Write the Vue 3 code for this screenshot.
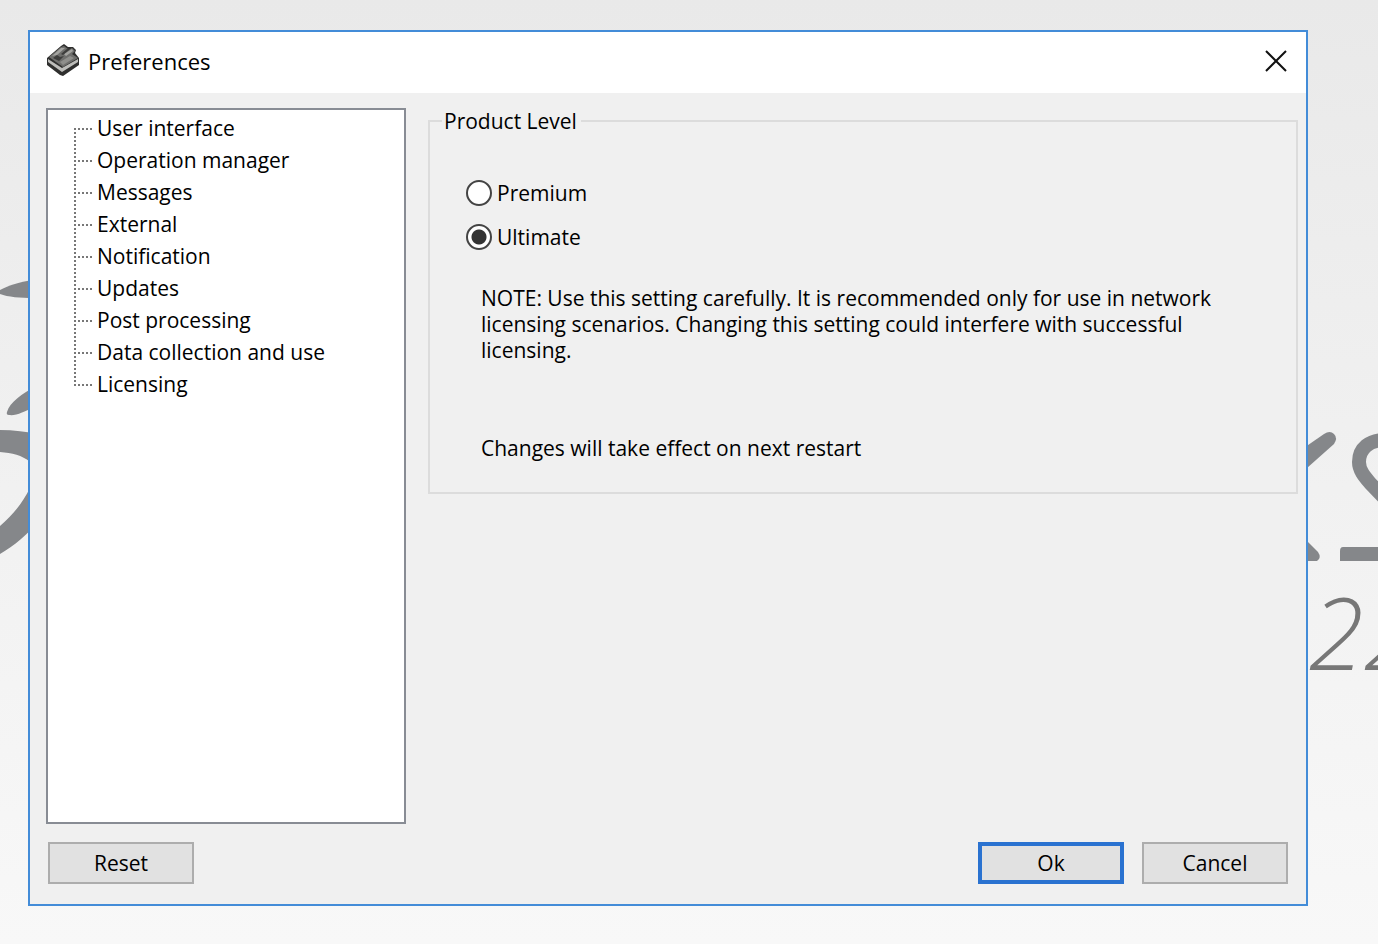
<script setup>
import { ref } from 'vue'

const pages = [
  'User interface',
  'Operation manager',
  'Messages',
  'External',
  'Notification',
  'Updates',
  'Post processing',
  'Data collection and use',
  'Licensing',
]
const levels = ['Premium', 'Ultimate']

const currentPage = ref('Licensing')
const level = ref('Ultimate')
const isOpen = ref(true)

function reset() {
  level.value = 'Ultimate'
}

function close() {
  isOpen.value = false
}
</script>

<template>
  <div class="desktop">
    <!-- splash artwork behind the dialog -->
    <div class="splash" aria-hidden="true">
      <svg class="art art-left" viewBox="0 0 60 320" width="60" height="320">
        <path d="M0 40 C8 36 18 32 34 30 V48 C20 48 8 47 0 44 Z" />
        <path d="M7 162 C10 152 22 144 36 136 V156 C24 162 16 166 9 165 Q6 165 7 162 Z" />
        <path d="M0 180 C14 180 26 182 40 184 V270 C28 284 14 296 0 304 V276 C14 264 23 252 30 238 V212 C22 205 12 203 0 202 Z" />
      </svg>
      <svg class="art art-right" viewBox="0 0 90 160" width="90" height="160">
        <path d="M10 42 L36 24 Q42 20 46 24 Q50 28 46 34 L10 66 Z" />
        <path d="M10 122 L18 130 L30 142 Q34 148 29 151 H10 Z" />
        <path class="stroke" d="M96 30 C82 30 71 38 71 52 C71 60 76 66 82 73 L100 92" />
        <path d="M55 137 H92 V151 H52 V141 Q52 137 55 137 Z" />
      </svg>
      <span class="year">2022</span>
    </div>

    <form v-if="isOpen" class="dialog" @submit.prevent="close">
      <header class="title-bar">
        <svg class="app-icon" viewBox="0 0 34 34" width="34" height="34">
          <path fill="#2f2f2e" d="M1 14 L15 2 L18 0 L22 3 L27 3 L30 6 L29 9 L33 14 V21 L17 32 L14 31 L1 21 Z" />
          <path fill="#bdbdba" d="M2 15 L16 24 L32 15 V18 L16 28 L2 18 Z" />
          <path fill="#6f6f6d" d="M3 13 L15 3 L18 2 L22 5 L18 9 L26 4 L29 7 L26 10 L32 14 L17 23 Z" />
          <path fill="#a4a4a1" d="M6 12 L15 4 L19 4 L11 11 Z M18 10 L26 5 L27 7 L20 12 Z" />
          <path fill="#8f8f8c" d="M14 18 L24 12 L28 14 L17 21 Z" />
          <path fill="#3d3d3c" d="M7 14 L11 11 L14 13 L18 12 L13 17 Z M22 4 L23 6 L17 11 L15 10 Z" />
        </svg>
        <h1>Preferences</h1>
        <button type="button" class="close" aria-label="Close" @click="close">
          <svg viewBox="0 0 22 22" width="22" height="22">
            <path d="M1 1 L21 21 M21 1 L1 21" />
          </svg>
        </button>
      </header>

      <div class="content">
        <ul class="tree">
          <li v-for="page in pages" :key="page" @click="currentPage = page">{{ page }}</li>
        </ul>

        <fieldset class="group">
          <legend>Product Level</legend>
          <label v-for="item in levels" :key="item" class="option">
            <input type="radio" name="level" :value="item" v-model="level" />
            {{ item }}
          </label>
          <p class="note">
            NOTE: Use this setting carefully. It is recommended only for use in network licensing
            scenarios. Changing this setting could interfere with successful licensing.
          </p>
          <p class="restart">Changes will take effect on next restart</p>
        </fieldset>
      </div>

      <footer class="actions">
        <button type="button" class="btn reset" @click="reset">Reset</button>
        <button type="submit" class="btn primary">Ok</button>
        <button type="button" class="btn" @click="close">Cancel</button>
      </footer>
    </form>
  </div>
</template>

<style>
body {
  margin: 0;
}
</style>

<style scoped>
* {
  box-sizing: border-box;
}

.desktop {
  position: relative;
  display: flex;
  min-height: 100vh;
  padding: 30px 70px 38px 28px;
  overflow: hidden;
  background: linear-gradient(#e9e9e9, #f0f0f0 45%, #f8f8f8);
  color: #000;
  font-family: 'Open Sans', 'Noto Sans', sans-serif;
  font-size: 21px;
  line-height: 26px;
}

/* background artwork, partly covered by the dialog */
.splash {
  position: absolute;
  inset: 0;
  overflow: hidden;
}

.art {
  position: absolute;
  fill: #85878a;
}

.art-left {
  left: 0;
  top: 250px;
}

.art-right {
  right: 0;
  top: 410px;
}

.art-right .stroke {
  fill: none;
  stroke: #85878a;
  stroke-width: 14;
}

.year {
  position: absolute;
  right: -41px;
  top: 576px;
  color: #777;
  font-size: 100px;
  font-style: italic;
  font-weight: 300;
  line-height: 110px;
}

.dialog {
  position: relative;
  display: flex;
  flex: 1;
  flex-direction: column;
  border: 2px solid #438cd8;
  background: #f0f0f0;
}

.title-bar {
  display: flex;
  align-items: center;
  height: 61px;
  padding: 0 19px 4px 16px;
  background: #fff;
}

h1 {
  flex: 1;
  margin: 0 0 0 8px;
  font-size: 22px;
  font-weight: 400;
}

.close {
  display: flex;
  padding: 0;
  border: 0;
  background: none;
}

.close path {
  fill: none;
  stroke: #111;
  stroke-width: 2;
}

.content {
  display: flex;
  flex: 1;
  align-items: flex-start;
  gap: 22px;
  padding: 15px 8px 18px 16px;
}

.tree {
  flex: 0 0 360px;
  align-self: stretch;
  margin: 0;
  padding: 2px 0 0 26px;
  border: 2px solid #888c94;
  background: #fff;
  list-style: none;
}

/* dotted connectors: vertical trunk and a short branch */
.tree li {
  padding-left: 23px;
  background:
    repeating-linear-gradient(90deg, #777 0 2px, transparent 2px 4px) 0 16px / 18px 2px no-repeat,
    repeating-linear-gradient(#777 0 2px, transparent 2px 4px) 0 0 / 2px 32px no-repeat;
  line-height: 32px;
  cursor: default;
}

.tree li:first-child {
  background-position: 0 16px, 0 16px;
}

.tree li:last-child {
  background-size: 18px 2px, 2px 16px;
}

.group {
  flex: 1;
  min-width: 0;
  min-height: 386px;
  margin: 0;
  padding: 37px 36px 28px;
  border: 2px solid #dcdcdc;
}

legend {
  margin-left: -24px;
  padding: 0 4px 0 2px;
}

.option {
  display: flex;
  align-items: center;
  gap: 5px;
  height: 44px;
}

.option input {
  width: 26px;
  height: 26px;
  margin: 0;
  border: 2px solid #444;
  border-radius: 50%;
  background: #fff;
  appearance: none;
}

.option input:checked {
  background: radial-gradient(circle, #333 0 7px, #fff 8px);
}

.note,
.restart {
  margin: 26px 0 0 15px;
}

.restart {
  margin-top: 72px;
}

.actions {
  display: flex;
  gap: 18px;
  padding: 0 18px 20px;
}

.btn {
  width: 146px;
  height: 42px;
  padding: 0;
  border: 2px solid #adadad;
  background: #e1e1e1;
  color: #000;
  font: inherit;
}

.btn.primary {
  border: 4px solid #2a72d0;
}

.reset {
  margin-right: auto;
}
</style>
